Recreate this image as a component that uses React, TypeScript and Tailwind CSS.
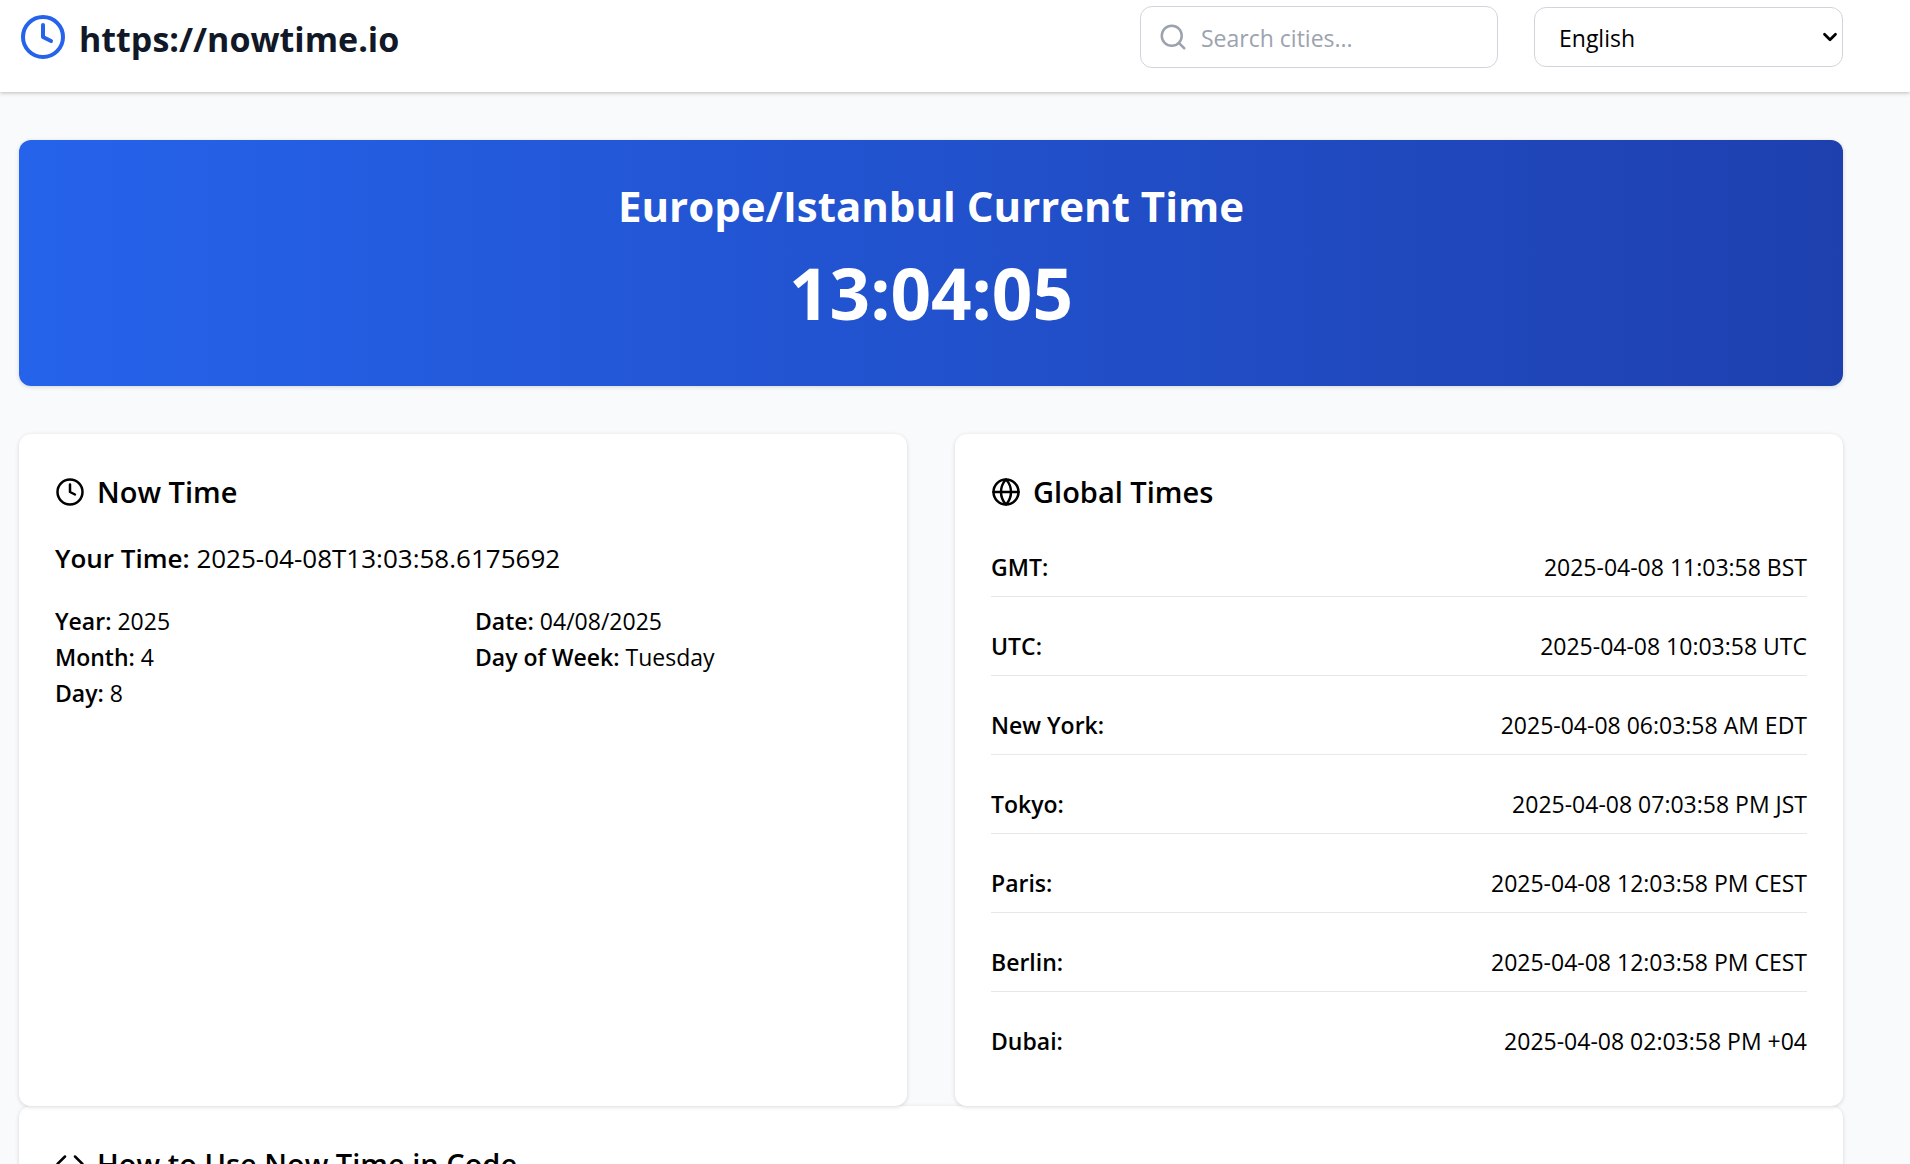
// src/App.tsx
import { useState } from 'react';
import type { ReactNode } from 'react';
import { ChevronDown, Clock, Code, Globe, Search } from 'lucide-react';

interface ZoneTime {
    label: string;
    value: string;
}

const globalTimes: ZoneTime[] = [
    { label: 'GMT', value: '2025-04-08 11:03:58 BST' },
    { label: 'UTC', value: '2025-04-08 10:03:58 UTC' },
    { label: 'New York', value: '2025-04-08 06:03:58 AM EDT' },
    { label: 'Tokyo', value: '2025-04-08 07:03:58 PM JST' },
    { label: 'Paris', value: '2025-04-08 12:03:58 PM CEST' },
    { label: 'Berlin', value: '2025-04-08 12:03:58 PM CEST' },
    { label: 'Dubai', value: '2025-04-08 02:03:58 PM +04' },
];

const languages = ['English', 'Türkçe', 'Deutsch', 'Français', 'Español'];

function Header() {
    const [query, setQuery] = useState('');
    const [language, setLanguage] = useState('English');

    return (
        <header className="relative flex h-[92px] items-center justify-between bg-white pb-[18px] pl-[19px] pr-[67px] shadow-[0_1px_4px_rgba(0,0,0,0.25)]">
            <a href="#" className="flex items-center gap-3">
                <Clock className="h-12 w-12 text-[#2563eb]" />
                <span className="pt-1 text-[34px] leading-[54px] font-bold text-[#111827]">https://nowtime.io</span>
            </a>

            <div className="flex items-center gap-9">
                <div className="relative">
                    <Search className="absolute left-[18px] top-4 h-[30px] w-[30px] text-[#9ca3af]" />
                    <input
                        type="text"
                        aria-label="Search cities"
                        placeholder="Search cities..."
                        value={query}
                        onChange={(e) => setQuery(e.target.value)}
                        className="h-[62px] w-[358px] rounded-xl border border-[#d1d5db] bg-white pl-[60px] pr-6 pt-[2px] text-[23px] placeholder:text-[#9ca3af]"
                    />
                </div>
                <div className="relative">
                    <select
                        aria-label="Language"
                        value={language}
                        onChange={(e) => setLanguage(e.target.value)}
                        className="h-[60px] w-[309px] appearance-none rounded-xl border border-[#d1d5db] bg-white px-6 pt-[2px] text-[23px]"
                    >
                        {languages.map((name) => (
                            <option key={name}>{name}</option>
                        ))}
                    </select>
                    <ChevronDown
                        strokeWidth={3}
                        className="pointer-events-none absolute right-[2px] top-[19px] h-[22px] w-[22px]"
                    />
                </div>
            </div>
        </header>
    );
}

function Card({ icon, title, children }: { icon: ReactNode; title: string; children?: ReactNode }) {
    return (
        <section className="rounded-xl bg-white p-9 shadow-[0_1px_4px_rgba(0,0,0,0.15)]">
            <h2 className="mb-[22px] flex items-center gap-3 text-[29px] leading-[44px] font-semibold">
                {icon}
                {title}
            </h2>
            {children}
        </section>
    );
}

function Field({ label, value }: { label: string; value: string }) {
    return (
        <p>
            <strong className="font-semibold">{label}:</strong> {value}
        </p>
    );
}

export default function App() {
    return (
        <div className="h-screen overflow-hidden bg-[#f9fafb] font-['Open_Sans','Noto_Sans',sans-serif] text-[23px] leading-9 text-black">
            <Header />

            <main className="pb-12 pl-[19px] pr-[67px] pt-12">
                <section className="mb-12 rounded-xl bg-linear-to-r/srgb from-[#2563eb] to-[#1e40af] p-9 text-center font-bold text-white shadow-[0_1px_4px_rgba(0,0,0,0.15)]">
                    <h1 className="text-[42px] leading-[60px]">Europe/Istanbul Current Time</h1>
                    <div className="text-[71px] leading-[114px]">13:04:05</div>
                </section>

                <div className="grid grid-cols-2 gap-12">
                    <Card icon={<Clock className="h-[30px] w-[30px]" />} title="Now Time">
                        <div className="mb-[23px] text-[26px] leading-[44px]">
                            <Field label="Your Time" value="2025-04-08T13:03:58.6175692" />
                        </div>
                        <div className="grid grid-cols-2 gap-6">
                            <div>
                                <Field label="Year" value="2025" />
                                <Field label="Month" value="4" />
                                <Field label="Day" value="8" />
                            </div>
                            <div>
                                <Field label="Date" value="04/08/2025" />
                                <Field label="Day of Week" value="Tuesday" />
                            </div>
                        </div>
                    </Card>

                    <Card icon={<Globe className="h-[30px] w-[30px]" />} title="Global Times">
                        <ul className="flex flex-col gap-[18px]">
                            {globalTimes.map((zone) => (
                                <li
                                    key={zone.label}
                                    className="flex justify-between border-b border-[#e5e7eb] pb-[11px] pt-[13px] last:border-b-0"
                                >
                                    <span className="font-semibold">{zone.label}:</span>
                                    <span>{zone.value}</span>
                                </li>
                            ))}
                        </ul>
                    </Card>
                </div>

                <Card icon={<Code className="h-[30px] w-[30px]" />} title="How to Use Now Time in Code" />
            </main>
        </div>
    );
}
